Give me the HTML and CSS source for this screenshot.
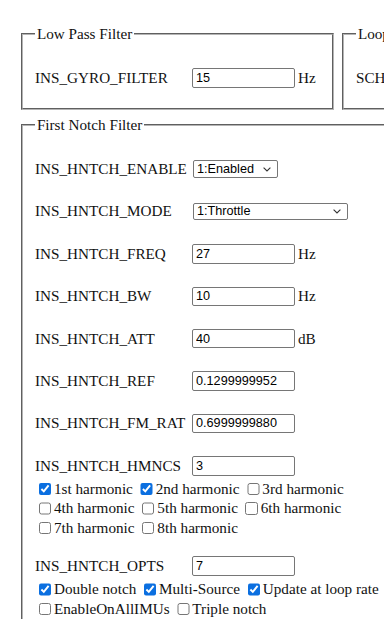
FILE: index.html
```html
<!DOCTYPE html>
<html lang="en">
<head>
<meta charset="utf-8">
<title>Notch Filter Setup</title>
<link rel="stylesheet" href="styles.css">
</head>
<body>
<div class="page">
  <div class="top">
    <fieldset class="fs fs-side">
      <legend>Low Pass Filter</legend>
      <div class="param last">
        <div class="line"><span class="lbl">INS_GYRO_FILTER</span><input class="num" type="text" value="15"><span class="unit">Hz</span></div>
      </div>
    </fieldset>
    <fieldset class="fs fs-side">
      <legend>Loop Rate</legend>
      <div class="param last">
        <div class="line"><span class="lbl">SCHED_LOOP_RATE</span><input class="num" type="text" value="400"><span class="unit">Hz</span></div>
      </div>
    </fieldset>
  </div>

  <fieldset class="fs fs-notch">
    <legend>First Notch Filter</legend>
    <div class="param">
      <div class="line"><span class="lbl">INS_HNTCH_ENABLE</span>
        <span class="selwrap sel-enable"><select class="sel"><option>1:Enabled</option><option>0:Disabled</option></select><svg class="chev" width="8" height="5" viewBox="0 0 8 5"><path d="M0.6 0.6 L4 4 L7.4 0.6" fill="none" stroke="#333" stroke-width="1.1"/></svg></span></div>
    </div>
    <div class="param">
      <div class="line"><span class="lbl">INS_HNTCH_MODE</span>
        <span class="selwrap sel-mode"><select class="sel"><option>1:Throttle</option><option>0:Fixed</option></select><svg class="chev" width="8" height="5" viewBox="0 0 8 5"><path d="M0.6 0.6 L4 4 L7.4 0.6" fill="none" stroke="#333" stroke-width="1.1"/></svg></span></div>
    </div>
    <div class="param">
      <div class="line"><span class="lbl">INS_HNTCH_FREQ</span><input class="num" type="text" value="27"><span class="unit">Hz</span></div>
    </div>
    <div class="param">
      <div class="line"><span class="lbl">INS_HNTCH_BW</span><input class="num" type="text" value="10"><span class="unit">Hz</span></div>
    </div>
    <div class="param">
      <div class="line"><span class="lbl">INS_HNTCH_ATT</span><input class="num" type="text" value="40"><span class="unit">dB</span></div>
    </div>
    <div class="param">
      <div class="line"><span class="lbl">INS_HNTCH_REF</span><input class="num" type="text" value="0.1299999952"></div>
    </div>
    <div class="param">
      <div class="line"><span class="lbl">INS_HNTCH_FM_RAT</span><input class="num" type="text" value="0.6999999880"></div>
    </div>
    <div class="param">
      <div class="line"><span class="lbl">INS_HNTCH_HMNCS</span><input class="num" type="text" value="3"></div>
      <div class="checks">
        <div class="chkline">
          <label class="chk"><input type="checkbox" checked>1st harmonic</label>
          <label class="chk"><input type="checkbox" checked>2nd harmonic</label>
          <label class="chk"><input type="checkbox">3rd harmonic</label>
        </div>
        <div class="chkline">
          <label class="chk"><input type="checkbox">4th harmonic</label>
          <label class="chk"><input type="checkbox">5th harmonic</label>
          <label class="chk"><input type="checkbox">6th harmonic</label>
        </div>
        <div class="chkline">
          <label class="chk"><input type="checkbox">7th harmonic</label>
          <label class="chk"><input type="checkbox">8th harmonic</label>
        </div>
      </div>
    </div>
    <div class="param">
      <div class="line"><span class="lbl">INS_HNTCH_OPTS</span><input class="num" type="text" value="7"></div>
      <div class="checks">
        <div class="chkline">
          <label class="chk"><input type="checkbox" checked>Double notch</label>
          <label class="chk"><input type="checkbox" checked>Multi-Source</label>
          <label class="chk"><input type="checkbox" checked>Update at loop rate</label>
        </div>
        <div class="chkline">
          <label class="chk"><input type="checkbox">EnableOnAllIMUs</label>
          <label class="chk"><input type="checkbox">Triple notch</label>
        </div>
      </div>
    </div>
  </fieldset>
</div>
</body>
</html>
```

FILE: styles.css
```css
html, body {
  margin: 0;
  padding: 0;
  background: #fff;
  overflow: hidden;
}

body {
  font-family: "Liberation Serif", "Times New Roman", serif;
  font-size: 15.2px;
  color: #111;
}

.page {
  padding: 25px 0 0 21px;
}

.top {
  display: flex;
  gap: 8px;
  width: max-content;
}

.fs {
  margin: 0;
  border: 2px groove #b4b4b4;
  padding: 24px 0 0 12px;
  min-width: 0;
  box-sizing: border-box;
}

.fs legend {
  padding: 0 1.9px;
  line-height: 17.5px;
}

.fs-side {
  width: 313px;
  flex-shrink: 0;
}

.fs-notch {
  width: 700px;
  margin-top: 6px;
}

.param {
  margin-bottom: 19px;
}

.param.last {
  margin-bottom: 18px;
}

.line {
  display: flex;
  align-items: center;
  height: 23.4px;
  white-space: nowrap;
}

.lbl {
  width: 157px;
  flex-shrink: 0;
}

.num {
  width: 103px;
  height: 19.5px;
  box-sizing: border-box;
  margin: 0;
  padding: 1px 3px;
  border: 1px solid #767676;
  border-radius: 2px;
  font: 12.67px "Liberation Sans", Arial, sans-serif;
  color: #000;
  background: #fff;
}

.unit {
  margin-left: 3px;
}

.selwrap {
  position: relative;
  display: flex;
  margin-left: 1px;
  height: 17.5px;
}

.sel {
  appearance: none;
  -webkit-appearance: none;
  width: 100%;
  height: 100%;
  box-sizing: border-box;
  margin: 0;
  padding: 0 14px 0 3px;
  border: 1px solid #767676;
  border-radius: 2px;
  font: 12.67px "Liberation Sans", Arial, sans-serif;
  color: #000;
  background: #fff;
}

.chev {
  position: absolute;
  right: 7px;
  top: 6.5px;
  pointer-events: none;
}

.sel-enable {
  width: 85px;
}

.sel-mode {
  width: 155px;
}

.checks {
  margin: 2px 0 -2px;
}

.chkline {
  display: flex;
  align-items: center;
  height: 19.3px;
  white-space: nowrap;
}

.chk {
  display: flex;
  align-items: center;
  margin-right: 3.8px;
}

.chk input {
  width: 12.35px;
  height: 12.35px;
  margin: 0 2.85px 0 3.8px;
  accent-color: #0b6fe0;
}
```
